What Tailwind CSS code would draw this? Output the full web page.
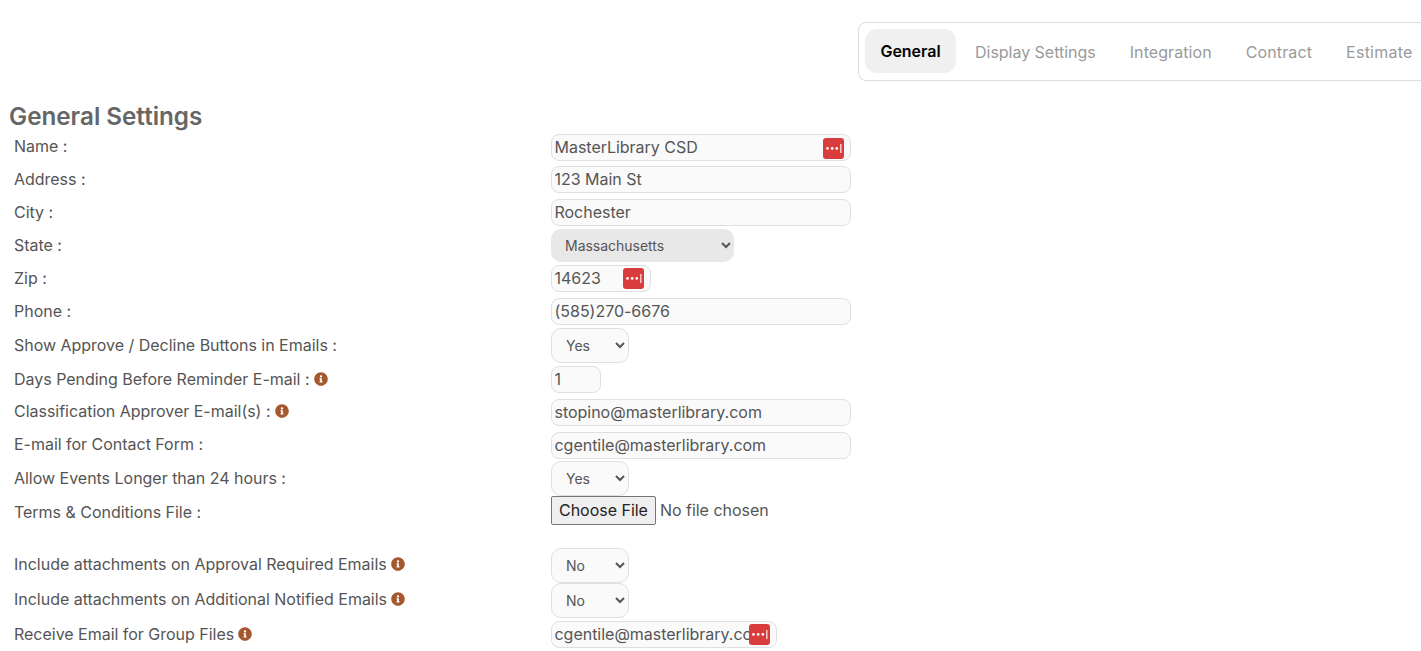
<!DOCTYPE html>
<html lang="en"><head><meta charset="utf-8"><title>General Settings</title>
<script src="https://cdn.jsdelivr.net/npm/@tailwindcss/browser@4"></script></head>
<body class="bg-white">
<svg class="hidden"><defs>
<symbol id="info" viewBox="0 0 512 512"><path fill="currentColor" d="M256 8C119 8 8 119.1 8 256c0 137 111 248 248 248s248-111 248-248C504 119.1 393 8 256 8zm0 110c23.2 0 42 18.8 42 42s-18.8 42-42 42-42-18.8-42-42 18.8-42 42-42zm56 254c0 6.6-5.4 12-12 12h-88c-6.6 0-12-5.4-12-12v-24c0-6.6 5.4-12 12-12h12v-64h-12c-6.6 0-12-5.4-12-12v-24c0-6.6 5.4-12 12-12h64c6.6 0 12 5.4 12 12v100h12c6.6 0 12 5.4 12 12v24z"/></symbol>
<symbol id="lp" viewBox="0 0 21 21"><rect width="21" height="21" rx="3" fill="#d83c3c"/><circle cx="4.5" cy="10.4" r="1.3" fill="#fff"/><circle cx="9.2" cy="10.4" r="1.3" fill="#fff"/><circle cx="13.8" cy="10.4" r="1.3" fill="#fff"/><rect x="17.3" y="6" width="1.1" height="9" fill="#fff"/></symbol>
</defs></svg>
<div class="w-[1421px] h-[651px] overflow-hidden font-['Inter',sans-serif] text-[16px] leading-6 text-[#555] tracking-[-0.02px]">
  <div class="pt-[22px] pl-[858px]">
    <div class="w-[640px] h-[59px] border border-[#ddd] rounded-lg flex items-start pl-[6px] text-[#9a9a9a]">
      <span class="mt-[6px] w-[91px] h-[44px] rounded-xl bg-[#f0f0f0] flex items-center justify-center text-black font-semibold text-[16px]">General</span>
      <span class="mt-[17px] ml-[19px]">Display Settings</span>
      <span class="mt-[17px] ml-[34px] tracking-[0.08px]">Integration</span>
      <span class="mt-[17px] ml-[34px] tracking-[0.12px]">Contract</span>
      <span class="mt-[17px] ml-[34px] tracking-[0.25px]">Estimate</span>
    </div>
  </div>
  <h1 class="mt-[21px] ml-[9px] h-[32px] text-[24.25px] leading-[30px] font-semibold text-[#666]">General Settings</h1>

  <div class="flex h-[33px]"><label class="w-[551px] pl-[14px]">Name :</label><div class="relative w-[300px] h-[27px]"><input value="MasterLibrary CSD" class="w-full h-full pl-[2.5px] pb-[2px] bg-[#fafafa] border border-[#e0e0e0] rounded-lg"><svg class="absolute left-[272px] top-[4px] w-[21px] h-[21px]"><use href="#lp"/></svg></div></div>
  <div class="flex h-[33px]"><label class="w-[551px] pl-[14px]">Address :</label><input value="123 Main St" class="-mt-px w-[300px] h-[27px] pl-[2.5px] pb-[2px] bg-[#fafafa] border border-[#e0e0e0] rounded-lg"></div>
  <div class="flex h-[33px]"><label class="w-[551px] pl-[14px]">City :</label><input value="Rochester" class="-mt-px w-[300px] h-[27px] pl-[2.5px] pb-[2px] bg-[#fafafa] border border-[#e0e0e0] rounded-lg"></div>
  <div class="flex h-[33px]"><label class="w-[551px] pl-[14px]">State :</label><select class="-mt-1 w-[183px] h-[33px] pl-[10px] bg-[#e8e8e8] rounded-[10px] text-[14px]"><option>Massachusetts</option></select></div>
  <div class="flex h-[33px]"><label class="w-[551px] pl-[14px]">Zip :</label><div class="relative -mt-px w-[100px] h-[27px]"><input value="14623" class="w-full h-full pl-[2.5px] pb-[2px] bg-[#fafafa] border border-[#e0e0e0] rounded-lg"><svg class="absolute left-[72px] top-[3px] w-[21px] h-[21px]"><use href="#lp"/></svg></div></div>
  <div class="flex h-[34px]"><label class="w-[551px] pl-[14px]">Phone :</label><input value="(585)270-6676" class="-mt-px w-[300px] h-[27px] pl-[2.5px] pb-[2px] bg-[#fafafa] border border-[#e0e0e0] rounded-lg"></div>
  <div class="flex h-[34px]"><label class="w-[551px] pl-[14px]">Show Approve / Decline Buttons in Emails :</label><select class="-mt-[5px] w-[78px] h-[35px] pl-[10px] bg-[#fafafa] border border-[#e0e0e0] rounded-[10px] text-[14px]"><option>Yes</option></select></div>
  <div class="flex h-[32px]"><label class="w-[551px] pl-[14px] flex items-center gap-[4px] h-6">Days Pending Before Reminder E-mail :<svg class="w-[14px] h-[14px] text-[#a5582e]"><use href="#info"/></svg></label><input value="1" class="-mt-px w-[50px] h-[27px] pl-[2.5px] pb-[2px] bg-[#fafafa] border border-[#e0e0e0] rounded-lg"></div>
  <div class="flex h-[33px]"><label class="w-[551px] pl-[14px] flex items-center gap-[4px] h-6">Classification Approver E-mail(s) :<svg class="w-[14px] h-[14px] text-[#a5582e]"><use href="#info"/></svg></label><input value="stopino@masterlibrary.com" class="w-[300px] h-[27px] pl-[2.5px] pb-[2px] bg-[#fafafa] border border-[#e0e0e0] rounded-lg"></div>
  <div class="flex h-[34px]"><label class="w-[551px] pl-[14px]">E-mail for Contact Form :</label><input value="cgentile@masterlibrary.com" class="w-[300px] h-[27px] pl-[2.5px] pb-[2px] bg-[#fafafa] border border-[#e0e0e0] rounded-lg"></div>
  <div class="flex h-[34px]"><label class="w-[551px] pl-[14px]">Allow Events Longer than 24 hours :</label><select class="-mt-[5px] w-[78px] h-[35px] pl-[10px] bg-[#fafafa] border border-[#e0e0e0] rounded-[10px] text-[14px]"><option>Yes</option></select></div>
  <div class="flex h-[52px]"><label class="w-[551px] pl-[14px]">Terms &amp; Conditions File :</label><input type="file" class="-mt-1 w-[300px] h-[29px] file:h-[29px] file:px-[7px] file:pb-[2px] file:bg-[#efefef] file:border file:border-[#767676] file:rounded-[2px] file:text-[#222]"></div>
  <div class="flex h-[35px]"><label class="w-[551px] pl-[14px] flex items-center gap-[4px] h-6">Include attachments on Approval Required Emails<svg class="w-[14px] h-[14px] text-[#a5582e]"><use href="#info"/></svg></label><select class="-mt-1 w-[78px] h-[35px] pl-[10px] bg-[#fafafa] border border-[#e0e0e0] rounded-[10px] text-[14px]"><option>No</option></select></div>
  <div class="flex h-[35px]"><label class="w-[551px] pl-[14px] flex items-center gap-[4px] h-6">Include attachments on Additional Notified Emails<svg class="w-[14px] h-[14px] text-[#a5582e]"><use href="#info"/></svg></label><select class="-mt-1 w-[78px] h-[35px] pl-[10px] bg-[#fafafa] border border-[#e0e0e0] rounded-[10px] text-[14px]"><option>No</option></select></div>
  <div class="flex h-[33px]"><label class="w-[551px] pl-[14px] flex items-center gap-[4px] h-6">Receive Email for Group Files<svg class="w-[14px] h-[14px] text-[#a5582e]"><use href="#info"/></svg></label><div class="relative -mt-px w-[226px] h-[27px]"><input value="cgentile@masterlibrary.com" class="w-full h-full pl-[2.5px] pb-[2px] bg-[#fafafa] border border-[#e0e0e0] rounded-lg"><svg class="absolute left-[198px] top-[3px] w-[21px] h-[21px]"><use href="#lp"/></svg></div></div>
</div>
</body></html>
